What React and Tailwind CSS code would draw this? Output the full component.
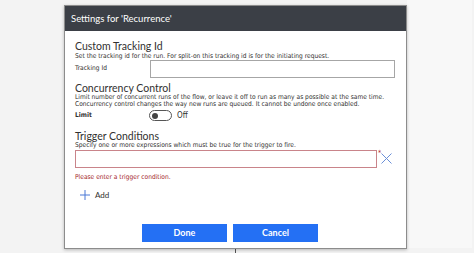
export default function App() {
  const small = { fontFamily: '"DejaVu Sans Condensed", "DejaVu Sans", sans-serif' };
  const head = { fontFamily: 'Lato, "Open Sans", sans-serif' };
  return (
    <div className="w-[474px] h-[253px] bg-[#f3f3f3] overflow-hidden relative">
      <div className="absolute left-[407px] top-0 w-[65px] h-[248px] bg-[#f8f8f8]" />
      <div className="absolute left-[235px] top-[249px] w-[1px] h-[4px] bg-[#555]" />
      <div className="relative ml-[64px] mt-[5px] w-[343px] h-[244px] bg-white border border-[#8c8c8c] shadow-[0_1px_3px_rgba(0,0,0,0.25)] flex flex-col">
        <div className="h-[25px] bg-[#3b3f46] flex items-center pl-[6px]">
          <span className="text-white text-[9.5px] leading-[12px]" style={head}>Settings for 'Recurrence'</span>
        </div>
        <div className="pl-[10px] flex flex-col text-[#323130]">
          <div className="mt-[9px] text-[10.5px] leading-[12px]" style={head}>Custom Tracking Id</div>
          <div className="text-[6.6px] leading-[8px]" style={small}>Set the tracking id for the run. For split-on this tracking id is for the initiating request.</div>
          <div className="flex items-center h-[18px]">
            <div className="w-[75px] text-[6.6px]" style={small}>Tracking Id</div>
            <div className="w-[245px] h-[18px] border border-[#a6a6a6] bg-white" />
          </div>
          <div className="mt-[4px] text-[10.5px] leading-[12px]" style={head}>Concurrency Control</div>
          <div className="text-[6.6px] leading-[7px]" style={small}>Limit number of concurrent runs of the flow, or leave it off to run as many as possible at the same time.</div>
          <div className="text-[6.6px] leading-[7px]" style={small}>Concurrency control changes the way new runs are queued. It cannot be undone once enabled.</div>
          <div className="mt-[2px] flex items-center h-[11px]">
            <div className="w-[74px] text-[6.6px] font-bold" style={small}>Limit</div>
            <div className="w-[23px] h-[11px] rounded-full border border-[#555] bg-white flex items-center pl-[2px]">
              <div className="w-[6px] h-[6px] rounded-full bg-[#444]" />
            </div>
            <div className="ml-[5px] text-[8px]" style={small}>Off</div>
          </div>
          <div className="mt-[9px] text-[10.5px] leading-[12px]" style={head}>Trigger Conditions</div>
          <div className="text-[6.6px] leading-[7px]" style={small}>Specify one or more expressions which must be true for the trigger to fire.</div>
          <div className="mt-[1px] flex items-start">
            <div className="w-[302px] h-[18px] border border-[#c9848a] bg-white" />
            <div className="text-[#a4262c] text-[7px] leading-[7px] ml-[1px]" style={small}>*</div>
            <svg width="11" height="11" viewBox="0 0 11 11" className="mt-[3px]">
              <path d="M0.5 0.5 L10.5 10.5 M10.5 0.5 L0.5 10.5" stroke="#6a8fd8" strokeWidth="1" fill="none" />
            </svg>
          </div>
          <div className="mt-[5px] text-[#a4262c] text-[6.6px] leading-[8px]" style={small}>Please enter a trigger condition.</div>
          <div className="mt-[8px] flex items-center h-[12px] pl-[5px]">
            <svg width="10" height="10" viewBox="0 0 10 10">
              <path d="M5 0 V10 M0 5 H10" stroke="#4a78d6" strokeWidth="1" fill="none" />
            </svg>
            <span className="ml-[5px] text-[8px]" style={head}>Add</span>
          </div>
        </div>
        <div className="mt-[23px] flex gap-[6px] pl-[77px]">
          <div className="w-[85px] h-[18px] bg-[#2470f4] text-white text-[9px] font-bold flex items-center justify-center" style={head}>Done</div>
          <div className="w-[85px] h-[18px] bg-[#2470f4] text-white text-[9px] font-bold flex items-center justify-center" style={head}>Cancel</div>
        </div>
      </div>
    </div>
  );
}
